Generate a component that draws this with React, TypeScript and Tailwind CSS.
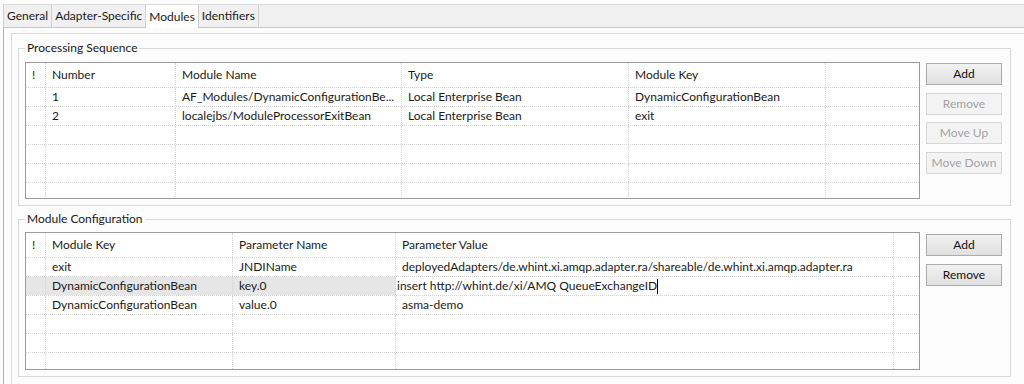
import React from "react";

const seqCols = "grid-cols-[20px_130px_226px_227px_197px_1fr]";
const cfgCols = "grid-cols-[20px_187px_163px_498px_1fr]";

const seqHeader = ["!", "Number", "Module Name", "Type", "Module Key", ""];
const seqRows = [
  ["", "1", "AF_Modules/DynamicConfigurationBe...", "Local Enterprise Bean", "DynamicConfigurationBean", ""],
  ["", "2", "localejbs/ModuleProcessorExitBean", "Local Enterprise Bean", "exit", ""],
  ["", "", "", "", "", ""],
  ["", "", "", "", "", ""],
  ["", "", "", "", "", ""],
  ["", "", "", "", "", ""],
];

const cfgHeader = ["!", "Module Key", "Parameter Name", "Parameter Value", ""];
const cfgRows = [
  ["", "exit", "JNDIName", "deployedAdapters/de.whint.xi.amqp.adapter.ra/shareable/de.whint.xi.amqp.adapter.ra", ""],
  ["", "DynamicConfigurationBean", "key.0", "insert http://whint.de/xi/AMQ QueueExchangeID", ""],
  ["", "DynamicConfigurationBean", "value.0", "asma-demo", ""],
  ["", "", "", "", ""],
  ["", "", "", "", ""],
  ["", "", "", "", ""],
];

const Cell = ({ text, last, className = "" }: { text: string; last: boolean; className?: string }) => (
  <div
    className={`flex items-center overflow-hidden whitespace-nowrap pl-[6px] ${
      last ? "" : "border-r border-dotted border-[#d4d4d4]"
    } ${className}`}
  >
    {text}
  </div>
);

const Table = ({
  cols,
  header,
  rows,
  height,
  editRow,
}: {
  cols: string;
  header: string[];
  rows: string[][];
  height: string;
  editRow?: number;
}) => (
  <div className={`w-[895px] ${height} overflow-hidden border border-[#9c9c9c] bg-white`}>
    <div className={`grid ${cols} h-[25px] border-b border-dotted border-[#d4d4d4]`}>
      {header.map((h, i) => (
        <Cell key={i} text={h} last={i === header.length - 1} />
      ))}
    </div>
    {rows.map((r, ri) => (
      <div key={ri} className={`grid ${cols} h-[19px] border-b border-dotted border-[#d4d4d4]`}>
        {r.map((c, ci) => {
          const selected = editRow === ri;
          if (selected && ci === 3) {
            // cell in edit mode, with the text cursor
            return (
              <div
                key={ci}
                className="flex items-center overflow-hidden whitespace-nowrap pl-[1px] bg-white border-r border-dotted border-[#d4d4d4]"
              >
                {c}
                <span className="inline-block w-[1px] h-[15px] bg-black" />
              </div>
            );
          }
          return (
            <Cell
              key={ci}
              text={c}
              last={ci === r.length - 1}
              className={selected && ci < 3 ? "bg-[#e6e6e6]" : ""}
            />
          );
        })}
      </div>
    ))}
  </div>
);

const Btn = ({ label, disabled }: { label: string; disabled?: boolean }) => (
  <button
    className={`w-[76px] h-[22px] flex items-center justify-center border ${
      disabled
        ? "border-[#d6d6d6] bg-[#f3f3f3] text-[#a3a3a3]"
        : "border-[#acacac] bg-gradient-to-b from-[#f2f2f2] to-[#e0e0e0] text-[#111111]"
    }`}
  >
    {label}
  </button>
);

const Group = ({
  title,
  children,
  className = "",
}: {
  title: string;
  children: React.ReactNode;
  className?: string;
}) => (
  <fieldset className={`w-[993px] border border-[#d9d9d9] pl-[6px] pr-[7px] pb-[6px] ${className}`}>
    <legend className="px-[2px] leading-[16px] text-[#1a1a1a]">{title}</legend>
    <div className="flex gap-[6px]">{children}</div>
  </fieldset>
);

export default function App() {
  const tabs = ["General", "Adapter-Specific", "Modules", "Identifiers"];
  return (
    <div
      className="w-[1024px] h-[384px] overflow-hidden bg-[#fcfcfc] pt-[4px] pl-[3px] text-[12px] text-[#1a1a1a]"
      style={{ fontFamily: "Lato, 'Liberation Sans', sans-serif" }}
    >
      <div className="flex h-[24px] border-t border-b border-t-[#dadada] border-b-[#c9c9c9] bg-[#f0f0f0]">
        {tabs.map((t, i) => (
          <div
            key={t}
            className={`flex items-center px-[3px] border-r border-[#cfcfcf] ${
              i === 0 ? "border-l" : ""
            } ${t === "Modules" ? "bg-white -mb-[1px]" : ""}`}
          >
            {t}
          </div>
        ))}
      </div>
      <div className="h-full border-l border-[#b0b0b0] pl-[7px] pt-[5px]">
        <div className="h-full border-l border-t border-[#d9d9d9] pl-[6px] pt-[6px]">
          <Group title="Processing Sequence" className="pt-[6px]">
            <Table cols={seqCols} header={seqHeader} rows={seqRows} height="h-[137px]" />
            <div className="flex flex-col gap-[7.5px] pt-[1px]">
              <Btn label="Add" />
              <Btn label="Remove" disabled />
              <Btn label="Move Up" disabled />
              <Btn label="Move Down" disabled />
            </div>
          </Group>
          <Group title="Module Configuration" className="mt-[5px] pt-[5px]">
            <Table cols={cfgCols} header={cfgHeader} rows={cfgRows} height="h-[138px]" editRow={1} />
            <div className="flex flex-col gap-[7.5px] pt-[2px]">
              <Btn label="Add" />
              <Btn label="Remove" />
            </div>
          </Group>
        </div>
      </div>
    </div>
  );
}
